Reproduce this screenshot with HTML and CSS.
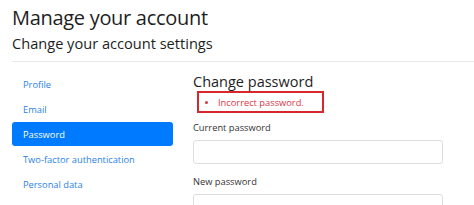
FILE: index.html
```html
<!DOCTYPE html>
<html>
<head>
<meta charset="utf-8">
<link rel="stylesheet" href="styles.css">
</head>
<body>
<div class="page">
  <h1 class="title">Manage your account</h1>
  <h2 class="subtitle">Change your account settings</h2>
  <hr class="rule">
  <div class="layout">
    <ul class="nav">
      <li><a class="nav-link">Profile</a></li>
      <li><a class="nav-link">Email</a></li>
      <li><a class="nav-link active">Password</a></li>
      <li><a class="nav-link">Two-factor authentication</a></li>
      <li><a class="nav-link">Personal data</a></li>
    </ul>
    <div class="content">
      <h4 class="section-title">Change password</h4>
      <div class="errors">
        <ul class="error-list"><li>Incorrect password.</li></ul>
      </div>
      <div class="field">
        <label class="label">Current password</label>
        <input class="input" type="password">
      </div>
      <div class="field second">
        <label class="label">New password</label>
        <input class="input" type="password">
      </div>
    </div>
  </div>
</div>
</body>
</html>
```
FILE: styles.css
```css
html, body {
  margin: 0;
  padding: 0;
  background: #ffffff;
  overflow: hidden;
}
body {
  font-family: "Open Sans", "Noto Sans", sans-serif;
  color: #212529;
}
.page {
  padding: 0 0 0 12px;
}
.title {
  margin: 0;
  padding-top: 4px;
  font-size: 20px;
  letter-spacing: -0.3px;
  font-weight: 400;
  line-height: 27px;
  color: #1e1e1e;
}
.subtitle {
  margin: 3px 0 0 0;
  font-size: 14.6px;
  letter-spacing: 0;
  font-weight: 500;
  line-height: 18px;
  color: #1e1e1e;
}
.rule {
  margin: 9px 0 0 0;
  border: 0;
  border-top: 1px solid #e8e8e8;
  height: 0;
}
.layout {
  display: flex;
  gap: 20px;
  margin-top: 10px;
}
.nav {
  list-style: none;
  margin: 0;
  padding: 0;
  width: 161px;
  flex: none;
  display: flex;
  flex-direction: column;
  gap: 1px;
}
.nav li {
  display: flex;
}
.nav-link {
  display: flex;
  align-items: center;
  width: 100%;
  box-sizing: border-box;
  padding: 0 11px;
  height: 24px;
  font-size: 9.3px;
  color: #2a7fe8;
  border-radius: 3px;
}
.nav-link.active {
  background: #007bff;
  color: #ffffff;
}
.content {
  width: 250px;
}
.section-title {
  margin: 0;
  font-size: 14.5px;
  font-weight: 400;
  line-height: 19px;
  color: #1e1e1e;
}
.errors {
  margin-left: 4px;
  width: 127px;
  height: 22px;
  box-sizing: border-box;
  border: 2px solid #d7262e;
  display: flex;
  align-items: center;
}
.error-list {
  margin: 0;
  padding: 0 0 0 19px;
  font-size: 9.3px;
  color: #dc3545;
}
.error-list li::marker {
  font-size: 8px;
}
.field {
  margin-top: 8px;
}
.field.second {
  margin-top: 11px;
}
.label {
  display: block;
  font-size: 9.3px;
  line-height: 13px;
  color: #333;
  margin-bottom: 6px;
}
.input {
  display: block;
  width: 250px;
  height: 24px;
  box-sizing: border-box;
  border: 1px solid #dedede;
  border-radius: 3px;
  margin: 0;
  padding: 0;
  background: #fff;
}
```
